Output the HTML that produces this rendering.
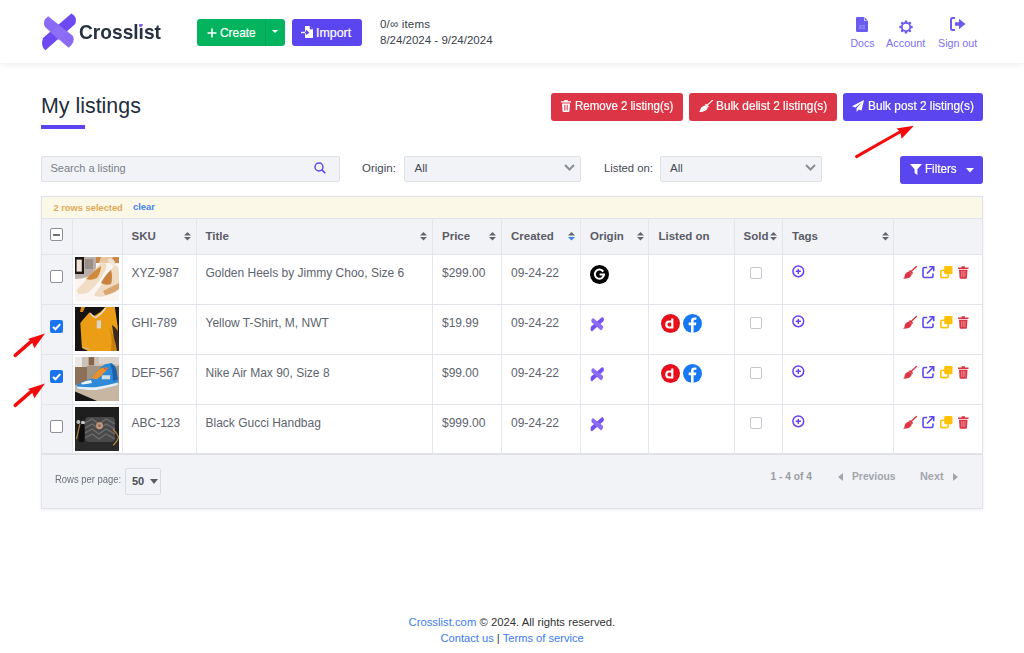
<!DOCTYPE html>
<html><head><meta charset="utf-8">
<style>
*{box-sizing:border-box;margin:0;padding:0}
html,body{width:1024px;height:653px;overflow:hidden;background:#fff;font-family:"Liberation Sans",sans-serif;position:relative}
.a{position:absolute;white-space:nowrap;line-height:1}
svg{position:absolute;overflow:visible}
.hdr{left:0;top:0;width:1024px;height:63px;background:#fff;box-shadow:0 1px 6px rgba(40,40,80,.10)}
.btn{position:absolute;border-radius:3px}
.green{background:#04b35e}
.purple{background:#5b45ef}
.red{background:#dc3545}
.wt{color:#fff;-webkit-text-stroke:.2px #fff}
.input{position:absolute;background:#f1f3f7;border:1px solid #dde0e5;border-radius:2px}
.hl{position:absolute;height:1px;background:#e2e4e9}
.vl{position:absolute;width:1px;background:#e4e6eb}
.th{font-size:11.5px;font-weight:bold;color:#5b5b66}
.td{font-size:12px;color:#60646e}
.cb{position:absolute;width:12px;height:12px;border:1px solid #c5c8cf;border-radius:2px;background:#fff}
.cbk{position:absolute;width:13px;height:13px;border:1px solid #8d9099;border-radius:2px;background:#fff}
</style></head><body>
<div class="a hdr"></div>
<!-- logo -->
<svg style="left:38px;top:11px" width="40" height="40" viewBox="0 0 40 40">
  <path d="M7.4 39.2Q2.2 35.5 5 27L33.4 2.5Q39.8 5.8 37.2 13Z" fill="#6c49f0"/>
  <path d="M10.1 5.2L35 25Q37.8 31 30.6 36.8L7 16Q3.6 10 10.1 5.2Z" fill="#8a6af5"/>
  <path d="M20 14.7L30.5 21L21 29.5L12 21Z" fill="#9073f6" opacity=".6"/>
</svg>
<div class="a" style="left:78.8px;top:20.9px;font-size:21px;font-weight:bold;color:#263142;transform:scaleX(.912);transform-origin:0 0">Crosslist</div>
<div class="a" style="left:139.3px;top:23.6px;width:3.2px;height:3px;border-radius:1px;background:#8a62f6"></div>

<!-- create / import -->
<div class="btn green" style="left:196.8px;top:18.6px;width:88.5px;height:27.8px"></div>
<div class="a" style="left:265px;top:18.6px;width:1px;height:27.8px;background:#0ca255"></div>
<svg style="left:206.5px;top:27.5px" width="10" height="10" viewBox="0 0 10 10"><path d="M5 0.5V9.5M0.5 5H9.5" stroke="#fff" stroke-width="1.6"/></svg>
<div class="a wt" style="left:220px;top:27.5px;font-size:11.9px">Create</div>
<svg style="left:272px;top:30px" width="6" height="3" viewBox="0 0 6 3"><path d="M0 0H6L3 3Z" fill="#fff"/></svg>
<div class="btn purple" style="left:291.5px;top:18.6px;width:70.6px;height:27.8px"></div>
<svg style="left:301px;top:26px" width="13" height="12" viewBox="0 0 13 12"><path d="M4 0H9L12 3V11.2Q12 12 11.2 12H4.8Q4 12 4 11.2Z" fill="#fff"/><path d="M9 0V3H12" fill="#5b45ef" stroke="#5b45ef" stroke-width=".6"/><path d="M0 6.5H7M5 4.5L7.3 6.5L5 8.5" stroke="#5b45ef" stroke-width="1.4" fill="none"/><path d="M0 6.5H4" stroke="#fff" stroke-width="1.4"/></svg>
<div class="a wt" style="left:316px;top:27px;font-size:12.4px">Import</div>

<div class="a" style="left:380px;top:17.5px;font-size:11.6px;letter-spacing:.15px;color:#3a3f4a">0/∞ items</div>
<div class="a" style="left:380px;top:34.8px;font-size:11.5px;color:#3a3f4a">8/24/2024 - 9/24/2024</div>

<!-- nav -->
<svg style="left:856px;top:17px" width="12" height="15" viewBox="0 0 12 15"><path d="M1.2 0H8L12 4V13.8Q12 15 10.8 15H1.2Q0 15 0 13.8V1.2Q0 0 1.2 0Z" fill="#6b5cf0"/><path d="M8 0V4H12" fill="#fff"/><path d="M8.6 0.3V3.4H11.7" fill="#6b5cf0"/><rect x="3" y="8" width="6" height="4" fill="#8f84f4"/><path d="M3 10H9M6 8V12" stroke="#6b5cf0" stroke-width=".6"/></svg>
<svg style="left:899px;top:20px" width="14" height="14" viewBox="-7 -7 14 14"><g fill="#6b5cf0"><circle r="5.1"/><rect x="-1.25" y="-6.6" width="2.5" height="3" rx=".5" transform="rotate(0)"/><rect x="-1.25" y="-6.6" width="2.5" height="3" rx=".5" transform="rotate(45)"/><rect x="-1.25" y="-6.6" width="2.5" height="3" rx=".5" transform="rotate(90)"/><rect x="-1.25" y="-6.6" width="2.5" height="3" rx=".5" transform="rotate(135)"/><rect x="-1.25" y="-6.6" width="2.5" height="3" rx=".5" transform="rotate(180)"/><rect x="-1.25" y="-6.6" width="2.5" height="3" rx=".5" transform="rotate(225)"/><rect x="-1.25" y="-6.6" width="2.5" height="3" rx=".5" transform="rotate(270)"/><rect x="-1.25" y="-6.6" width="2.5" height="3" rx=".5" transform="rotate(315)"/></g><circle r="3.3" fill="#fff"/></svg>
<svg style="left:950px;top:17px" width="16" height="14" viewBox="0 0 16 14"><path d="M5 1H2.5Q1 1 1 2.5V11.5Q1 13 2.5 13H5" stroke="#6b5cf0" stroke-width="2" fill="none"/><path d="M5 5.2H9V1.8L15.5 7L9 12.2V8.8H5Z" fill="#6b5cf0"/></svg>
<div class="a" style="left:850.5px;top:37.5px;font-size:10.5px;color:#7d70f3">Docs</div>
<div class="a" style="left:886px;top:37.5px;font-size:10.9px;color:#7d70f3">Account</div>
<div class="a" style="left:938px;top:37.5px;font-size:10.7px;color:#7d70f3">Sign out</div>

<!-- title -->
<div class="a" style="left:41px;top:96.3px;font-size:21.4px;color:#1f2d3d">My listings</div>
<div class="a" style="left:41px;top:125px;width:44px;height:4px;background:#5b45ee"></div>

<!-- bulk buttons -->
<div class="btn red" style="left:551px;top:93px;width:132px;height:28px"></div>
<svg style="left:561px;top:100px" width="10" height="12" viewBox="0 0 10 12"><path d="M0 1.3H10V2.6H0Z M3.3 0H6.7V1.3H3.3Z" fill="#fff"/><path d="M1 3.4H9L8.4 11.2Q8.3 12 7.5 12H2.5Q1.7 12 1.6 11.2Z" fill="#fff"/><path d="M3.5 4.8V10.5M5 4.8V10.5M6.5 4.8V10.5" stroke="#dc3545" stroke-width=".7"/></svg>
<div class="a wt" style="left:575px;top:100px;font-size:12.6px;transform:scaleX(.912);transform-origin:0 0">Remove 2 listing(s)</div>
<div class="btn red" style="left:689px;top:93px;width:148px;height:28px"></div>
<svg style="left:699px;top:99.8px" width="14" height="12" viewBox="0 0 14 12"><path d="M13.5 0.4L8 5.4" stroke="#fff" stroke-width="1.2" stroke-linecap="round"/><path d="M6.4 4.4L9.4 7.2" stroke="#fff" stroke-width="1.8"/><path d="M6 5.4L8.6 7.8Q8 11.9 0 12Q1.6 10.8 1.4 9.6Q1.6 6.6 6 5.4Z" fill="#fff"/></svg>
<div class="a wt" style="left:716px;top:100px;font-size:12.6px;transform:scaleX(.94);transform-origin:0 0">Bulk delist 2 listing(s)</div>
<div class="btn purple" style="left:843px;top:93px;width:140px;height:28px"></div>
<svg style="left:852px;top:100px" width="12" height="12" viewBox="0 0 12 12"><path d="M12 0L0 6.2L3.4 7.6L10 2.2L4.6 8.2L4.6 12L6.8 9.4L9.6 10.6Z" fill="#fff"/></svg>
<div class="a wt" style="left:868px;top:100px;font-size:12.6px;transform:scaleX(.94);transform-origin:0 0">Bulk post 2 listing(s)</div>

<!-- arrow to bulk post -->
<svg style="left:0;top:0" width="1024" height="200" viewBox="0 0 1024 200"><path d="M856.5 156.6L900.2 131.7" stroke="#f40b0b" stroke-width="3" stroke-linecap="round"/><path d="M913.9 125.7L896.5 128.6L900.2 131.7L901.6 138.8Z" fill="#f40b0b"/></svg>

<!-- filter row -->
<div class="input" style="left:41px;top:156px;width:299px;height:26px"></div>
<div class="a" style="left:50.5px;top:162.5px;font-size:11px;color:#7b808b">Search a listing</div>
<svg style="left:314px;top:162px" width="12" height="12" viewBox="0 0 12 12"><circle cx="5" cy="5" r="4" stroke="#5b45ef" stroke-width="1.4" fill="none"/><path d="M7.9 7.9L10.8 10.8" stroke="#5b45ef" stroke-width="1.6" stroke-linecap="round"/></svg>
<div class="a" style="left:362px;top:162.5px;font-size:11.5px;color:#444a55">Origin:</div>
<div class="input" style="left:404px;top:156px;width:177px;height:26px"></div>
<div class="a" style="left:414.5px;top:162.5px;font-size:11.5px;color:#444a55">All</div>
<svg style="left:564px;top:164px" width="11" height="7" viewBox="0 0 11 7"><path d="M1 1L5.5 5.5L10 1" stroke="#8a8e96" stroke-width="2" fill="none"/></svg>
<div class="a" style="left:604px;top:162.5px;font-size:11.3px;color:#444a55">Listed on:</div>
<div class="input" style="left:660px;top:156px;width:162px;height:26px"></div>
<div class="a" style="left:670px;top:162.5px;font-size:11.5px;color:#444a55">All</div>
<svg style="left:805px;top:164px" width="11" height="7" viewBox="0 0 11 7"><path d="M1 1L5.5 5.5L10 1" stroke="#8a8e96" stroke-width="2" fill="none"/></svg>
<div class="btn purple" style="left:900px;top:156px;width:83px;height:28px"></div>
<svg style="left:909.5px;top:164px" width="12" height="11" viewBox="0 0 12 11"><path d="M0 0H12L7.4 5.2V11L4.6 9V5.2Z" fill="#fff"/></svg>
<div class="a wt" style="left:925px;top:163px;font-size:12.6px;transform:scaleX(.92);transform-origin:0 0">Filters</div>
<svg style="left:966px;top:168px" width="8" height="5" viewBox="0 0 8 5"><path d="M0 0H8L4 4.5Z" fill="#fff"/></svg>

<!-- table -->
<div class="a" style="left:41px;top:196px;width:942px;height:313px;border:1px solid #e1e3e8;box-shadow:0 1px 3px rgba(0,0,0,.08)"></div>
<div class="a" style="left:42px;top:197px;width:940px;height:21px;background:#fcf8e8"></div>
<div class="hl" style="left:42px;top:218px;width:940px"></div>
<div class="a" style="left:42px;top:219px;width:940px;height:35px;background:#f1f3f7"></div>
<div class="a" style="left:42px;top:254px;width:31px;height:200px;background:#f1f3f7"></div>
<div class="a" style="left:42px;top:454px;width:940px;height:54px;background:#f1f3f7"></div>
<div class="hl" style="left:42px;top:254px;width:940px"></div>
<div class="hl" style="left:42px;top:304px;width:940px"></div>
<div class="hl" style="left:42px;top:354px;width:940px"></div>
<div class="hl" style="left:42px;top:404px;width:940px"></div>
<div class="hl" style="left:42px;top:453px;width:940px;height:2px;background:#e0e2e6"></div>
<div class="vl" style="left:72px;top:219px;height:235px"></div>
<div class="vl" style="left:122px;top:219px;height:235px"></div>
<div class="vl" style="left:196px;top:219px;height:235px"></div>
<div class="vl" style="left:432px;top:219px;height:235px"></div>
<div class="vl" style="left:501px;top:219px;height:235px"></div>
<div class="vl" style="left:580px;top:219px;height:235px"></div>
<div class="vl" style="left:648px;top:219px;height:235px"></div>
<div class="vl" style="left:734px;top:219px;height:235px"></div>
<div class="vl" style="left:782px;top:219px;height:235px"></div>
<div class="vl" style="left:893px;top:219px;height:235px"></div>

<div class="a" style="left:53.5px;top:203.5px;font-size:9.3px;font-weight:bold;color:#e2a955">2 rows selected</div>
<div class="a" style="left:133px;top:202.3px;font-size:9.4px;font-weight:bold;color:#3d84f2">clear</div>

<!-- header -->
<div class="cbk" style="left:50px;top:228px"><div style="position:absolute;left:2px;top:5px;width:7px;height:1.5px;background:#6d7079"></div></div>
<div class="a th" style="left:131.5px;top:231px">SKU</div>
<div class="a th" style="left:205.5px;top:231px">Title</div>
<div class="a th" style="left:442px;top:231px">Price</div>
<div class="a th" style="left:511px;top:231px">Created</div>
<div class="a th" style="left:590px;top:231px">Origin</div>
<div class="a th" style="left:658.5px;top:231px">Listed on</div>
<div class="a th" style="left:743.5px;top:231px">Sold</div>
<div class="a th" style="left:792px;top:231px">Tags</div>
<!-- sort icons -->
<svg style="left:183.5px;top:231.6px" width="7" height="8.6" viewBox="0 0 7 8.6"><path d="M0 3.6H7L3.5 0Z M0 5H7L3.5 8.6Z" fill="#63666d"/></svg>
<svg style="left:420px;top:231.6px" width="7" height="8.6" viewBox="0 0 7 8.6"><path d="M0 3.6H7L3.5 0Z M0 5H7L3.5 8.6Z" fill="#63666d"/></svg>
<svg style="left:489px;top:231.6px" width="7" height="8.6" viewBox="0 0 7 8.6"><path d="M0 3.6H7L3.5 0Z M0 5H7L3.5 8.6Z" fill="#63666d"/></svg>
<svg style="left:567.5px;top:231.6px" width="7" height="8.6" viewBox="0 0 7 8.6"><path d="M0 3.6H7L3.5 0Z" fill="#63666d"/><path d="M0 5H7L3.5 8.6Z" fill="#3b82f0"/></svg>
<svg style="left:636.5px;top:231.6px" width="7" height="8.6" viewBox="0 0 7 8.6"><path d="M0 3.6H7L3.5 0Z M0 5H7L3.5 8.6Z" fill="#63666d"/></svg>
<svg style="left:769.5px;top:231.6px" width="7" height="8.6" viewBox="0 0 7 8.6"><path d="M0 3.6H7L3.5 0Z M0 5H7L3.5 8.6Z" fill="#63666d"/></svg>
<svg style="left:881.5px;top:231.6px" width="7" height="8.6" viewBox="0 0 7 8.6"><path d="M0 3.6H7L3.5 0Z M0 5H7L3.5 8.6Z" fill="#63666d"/></svg>

<!-- ROWS -->
<div class="cbk" style="left:50px;top:270px"></div>
<svg style="left:75px;top:257px" width="44" height="44" viewBox="0 0 44 44"><defs><filter id="bl1" x="-10%" y="-10%" width="120%" height="120%"><feGaussianBlur stdDeviation="0.5"/></filter></defs><rect width="44" height="44" fill="#fbf5f1"/><g filter="url(#bl1)"><path d="M0 0H21V14Q14 22 0 22Z" fill="#b9aea8"/><rect x="10" y="2" width="8" height="10" fill="#9a8e88"/><rect x="0" y="0" width="9" height="17" fill="#1c1816"/><rect x="1.6" y="2.6" width="5.2" height="12" fill="#efe2d6"/><rect x="21" y="0" width="23" height="6" fill="#c8874a"/><path d="M26 0H38L36 6H24Z" fill="#e8c8a0"/><path d="M2 33Q10 24 22 10Q26 5 30 6Q33 8 30 14Q24 26 14 35Q10 37 5 37Q1 36 2 33Z" fill="#f1dcc4"/><path d="M11 22Q18 14 26 9Q26 15 22 21Q16 24 11 22Z" fill="#cf8a3e"/><path d="M19 38Q24 31 30 22Q36 12 40 8Q44 10 44 16V30Q40 36 30 39Q22 41 19 38Z" fill="#efdac2"/><path d="M26 26Q30 18 36 13Q38 20 36 27Q31 29 26 26Z" fill="#c8823c"/><path d="M28 34Q36 30 44 26V32Q38 37 30 38Z" fill="#d9a670"/><path d="M33 2Q38 1 40 5L39 10Q36 6 33 5Z" fill="#f3e2d0"/></g></svg>
<div class="a td" style="left:131.5px;top:267px">XYZ-987</div>
<div class="a td" style="left:205.5px;top:267px">Golden Heels by Jimmy Choo, Size 6</div>
<div class="a td" style="left:442px;top:267px">$299.00</div>
<div class="a td" style="left:511px;top:267px">09-24-22</div>
<svg style="left:589.5px;top:264.5px" width="19" height="19" viewBox="0 0 19 19"><circle cx="9.5" cy="9.5" r="9.5" fill="#000"/><path d="M13.3 6.6A4.6 4.6 0 1 0 14 9.6H9.6" stroke="#fff" stroke-width="2" fill="none"/></svg>
<div class="cb" style="left:749.5px;top:267px"></div>
<svg style="left:792px;top:265px" width="13" height="13" viewBox="0 0 13 13"><circle cx="6.3" cy="6.3" r="5.4" stroke="#6a3ff0" stroke-width="1.5" fill="none"/><path d="M6.3 3.7V8.9M3.7 6.3H8.9" stroke="#6a3ff0" stroke-width="1.4"/></svg>
<svg style="left:902.8px;top:265.8px" width="14" height="13" viewBox="0 0 14 13"><path d="M13.4 0.5L8.2 5.6" stroke="#dc3545" stroke-width="1.4" stroke-linecap="round"/><path d="M6.4 4.6L9.6 7.6" stroke="#dc3545" stroke-width="1.9"/><path d="M6 5.6L8.8 8.3Q8 12.8 0 12.8Q1.7 11.6 1.5 10.4Q1.6 7 6 5.6Z" fill="#dc3545"/></svg>
<svg style="left:922px;top:265.5px" width="12.5" height="12.5" viewBox="0 0 12.5 12.5"><path d="M5.2 1.5H2.5Q1 1.5 1 3V10Q1 11.5 2.5 11.5H9.5Q11 11.5 11 10V7.5" stroke="#5a48f0" stroke-width="1.6" fill="none"/><path d="M5 7.5L11 1.5M7.2 0.8H11.7V5.3" stroke="#5a48f0" stroke-width="1.6" fill="none"/></svg>
<svg style="left:940px;top:265.5px" width="12.5" height="12.5" viewBox="0 0 12.5 12.5"><rect x="0.8" y="4.2" width="7.4" height="7.4" rx="1.2" stroke="#ffc107" stroke-width="1.6" fill="none"/><rect x="4.2" y="0" width="8.3" height="8.3" rx="1.3" fill="#ffc107"/></svg>
<svg style="left:958px;top:265.5px" width="10.5" height="13" viewBox="0 0 10.5 13"><path d="M0 1.6H10.5V2.9H0Z M3.5 0.3H7V1.6H3.5Z" fill="#dc3545"/><path d="M1 3.7H9.5L8.9 12Q8.8 12.8 8 12.8H2.5Q1.7 12.8 1.6 12Z" fill="#dc3545"/><path d="M3.6 5V11M5.25 5V11M6.9 5V11" stroke="#fff" stroke-width=".7" opacity=".55"/></svg>
<svg style="left:50.2px;top:320.4px" width="13" height="13" viewBox="0 0 13 13"><rect width="13" height="13" rx="2" fill="#1a73f0"/><path d="M3 6.9L5.4 9.3L10.2 4.1" stroke="#fff" stroke-width="2" fill="none"/></svg>
<svg style="left:75px;top:307px" width="44" height="44" viewBox="0 0 44 44"><defs><filter id="bl2" x="-10%" y="-10%" width="120%" height="120%"><feGaussianBlur stdDeviation="0.5"/></filter></defs><rect width="44" height="44" fill="#161312"/><g filter="url(#bl2)"><path d="M6 0H10L8 5H5Z" fill="#d98a12"/><path d="M8.4 12.2L14.5 5.3Q18 9 19.9 8.4Q26 5 30.6 0H39.8L42.8 19.9V44H13L6.9 41L5.3 16Z" fill="#eb9d14"/><path d="M37 18Q44 22 44 30V44H38Q40 34 37 18Z" fill="#3a2a22"/><path d="M34 20Q38 30 36 44H42Q40 30 34 20Z" fill="#c8800c"/><path d="M15.3 6.1Q19 11 21 10.3Q27 7 30.6 0.7" stroke="#e6e0d6" stroke-width="1.5" fill="none"/><rect x="21.8" y="13.4" width="4.2" height="8" fill="#d9d6d0"/><path d="M8 40Q11 42 14 42" stroke="#c8c2b8" stroke-width="1" fill="none"/></g></svg>
<div class="a td" style="left:131.5px;top:317px">GHI-789</div>
<div class="a td" style="left:205.5px;top:317px">Yellow T-Shirt, M, NWT</div>
<div class="a td" style="left:442px;top:317px">$19.99</div>
<div class="a td" style="left:511px;top:317px">09-24-22</div>
<svg style="left:589.4px;top:315.6px" width="16" height="16" viewBox="0 0 40.6 40.6"><path d="M7.4 39.2Q2.2 35.5 5 27L33.4 2.5Q39.8 5.8 37.2 13Z" fill="#7450f1"/><path d="M10.1 5.2L35 25Q37.8 31 30.6 36.8L7 16Q3.6 10 10.1 5.2Z" fill="#8c6cf5"/></svg>
<svg style="left:661px;top:313.5px" width="19" height="19" viewBox="0 0 19 19"><circle cx="9.5" cy="9.5" r="9.5" fill="#e5101c"/><path d="M11.3 4.5V13.5H8.3Q5.3 13.5 5.3 10.5Q5.3 7.5 8.3 7.5H11.3" stroke="#fff" stroke-width="2.2" fill="none"/></svg>
<svg style="left:682.5px;top:313.5px" width="19" height="19" viewBox="0 0 19 19"><circle cx="9.5" cy="9.5" r="9.5" fill="#1877f2"/><path d="M10.6 19V11.2H13L13.3 8.6H10.6V7Q10.6 5.8 11.9 5.8H13.4V3.6Q12.6 3.4 11.6 3.4Q8 3.4 8 6.8V8.6H5.7V11.2H8V19Z" fill="#fff"/></svg>
<div class="cb" style="left:749.5px;top:317px"></div>
<svg style="left:792px;top:315px" width="13" height="13" viewBox="0 0 13 13"><circle cx="6.3" cy="6.3" r="5.4" stroke="#6a3ff0" stroke-width="1.5" fill="none"/><path d="M6.3 3.7V8.9M3.7 6.3H8.9" stroke="#6a3ff0" stroke-width="1.4"/></svg>
<svg style="left:902.8px;top:315.8px" width="14" height="13" viewBox="0 0 14 13"><path d="M13.4 0.5L8.2 5.6" stroke="#dc3545" stroke-width="1.4" stroke-linecap="round"/><path d="M6.4 4.6L9.6 7.6" stroke="#dc3545" stroke-width="1.9"/><path d="M6 5.6L8.8 8.3Q8 12.8 0 12.8Q1.7 11.6 1.5 10.4Q1.6 7 6 5.6Z" fill="#dc3545"/></svg>
<svg style="left:922px;top:315.5px" width="12.5" height="12.5" viewBox="0 0 12.5 12.5"><path d="M5.2 1.5H2.5Q1 1.5 1 3V10Q1 11.5 2.5 11.5H9.5Q11 11.5 11 10V7.5" stroke="#5a48f0" stroke-width="1.6" fill="none"/><path d="M5 7.5L11 1.5M7.2 0.8H11.7V5.3" stroke="#5a48f0" stroke-width="1.6" fill="none"/></svg>
<svg style="left:940px;top:315.5px" width="12.5" height="12.5" viewBox="0 0 12.5 12.5"><rect x="0.8" y="4.2" width="7.4" height="7.4" rx="1.2" stroke="#ffc107" stroke-width="1.6" fill="none"/><rect x="4.2" y="0" width="8.3" height="8.3" rx="1.3" fill="#ffc107"/></svg>
<svg style="left:958px;top:315.5px" width="10.5" height="13" viewBox="0 0 10.5 13"><path d="M0 1.6H10.5V2.9H0Z M3.5 0.3H7V1.6H3.5Z" fill="#dc3545"/><path d="M1 3.7H9.5L8.9 12Q8.8 12.8 8 12.8H2.5Q1.7 12.8 1.6 12Z" fill="#dc3545"/><path d="M3.6 5V11M5.25 5V11M6.9 5V11" stroke="#fff" stroke-width=".7" opacity=".55"/></svg>
<svg style="left:0;top:0px" width="60" height="400" viewBox="0 0 60 400"><path d="M15.2 355.4L31.6 341.1" stroke="#f40b0b" stroke-width="3.4" stroke-linecap="round"/><path d="M45 333.6L27.8 339L31.6 341.1L34.3 348.3Z" fill="#f40b0b"/></svg>
<svg style="left:50.2px;top:370.4px" width="13" height="13" viewBox="0 0 13 13"><rect width="13" height="13" rx="2" fill="#1a73f0"/><path d="M3 6.9L5.4 9.3L10.2 4.1" stroke="#fff" stroke-width="2" fill="none"/></svg>
<svg style="left:75px;top:357px" width="44" height="44" viewBox="0 0 44 44"><defs><filter id="bl3" x="-10%" y="-10%" width="120%" height="120%"><feGaussianBlur stdDeviation="0.5"/></filter></defs><rect width="44" height="44" fill="#b8a898"/><g filter="url(#bl3)"><rect x="0" y="0" width="44" height="10" fill="#cbc1b6"/><rect x="0" y="0" width="7" height="11" fill="#ece8e4"/><rect x="13.7" y="0" width="5.4" height="8.4" fill="#86654a"/><rect x="24" y="0" width="20" height="7" fill="#dcd4cc"/><rect x="0" y="10" width="12" height="19" fill="#8c7058"/><rect x="12" y="9" width="32" height="19" fill="#a49484"/><path d="M0 28L44 26V44H0Z" fill="#c6b6a2"/><path d="M0 34.4L22 44H0Z" fill="#171514"/><path d="M1.1 29Q4 26 6.9 25.2L16 21.4L23.7 12.2Q28 7.5 31.3 6.9L36.7 6.1Q40 8 41.3 12.2L42.8 22.2V28.3Q30 31 22.2 32.9Q10 33 2.3 31.4Z" fill="#2d8ad6"/><path d="M35 6.5Q40 8 41.3 12.2L42.8 22.2L38 24Q38 14 35 6.5Z" fill="#1f5fae"/><path d="M1.5 29.6Q14 30.5 22 30Q34 28 42.8 25.5V28.3Q32 31 22.2 32.9Q10 33.2 2.3 31.4Z" fill="#e9eef2"/><path d="M6 26Q11 23.5 16 23L17 26Q11 27 7 27.5Z" fill="#eef2f5"/><path d="M16 21.4L23.7 12.2Q27 10 33 10.7L31 14Q26 19 22 22.2Z" fill="#e6902e"/><path d="M26.8 18.3L35.2 18.3L35 22.2L26.8 22.2Z" fill="#d5dde4"/><path d="M29 11L31.5 12.5" stroke="#e24a3a" stroke-width="1.2"/></g></svg>
<div class="a td" style="left:131.5px;top:367px">DEF-567</div>
<div class="a td" style="left:205.5px;top:367px">Nike Air Max 90, Size 8</div>
<div class="a td" style="left:442px;top:367px">$99.00</div>
<div class="a td" style="left:511px;top:367px">09-24-22</div>
<svg style="left:589.4px;top:365.6px" width="16" height="16" viewBox="0 0 40.6 40.6"><path d="M7.4 39.2Q2.2 35.5 5 27L33.4 2.5Q39.8 5.8 37.2 13Z" fill="#7450f1"/><path d="M10.1 5.2L35 25Q37.8 31 30.6 36.8L7 16Q3.6 10 10.1 5.2Z" fill="#8c6cf5"/></svg>
<svg style="left:661px;top:363.5px" width="19" height="19" viewBox="0 0 19 19"><circle cx="9.5" cy="9.5" r="9.5" fill="#e5101c"/><path d="M11.3 4.5V13.5H8.3Q5.3 13.5 5.3 10.5Q5.3 7.5 8.3 7.5H11.3" stroke="#fff" stroke-width="2.2" fill="none"/></svg>
<svg style="left:682.5px;top:363.5px" width="19" height="19" viewBox="0 0 19 19"><circle cx="9.5" cy="9.5" r="9.5" fill="#1877f2"/><path d="M10.6 19V11.2H13L13.3 8.6H10.6V7Q10.6 5.8 11.9 5.8H13.4V3.6Q12.6 3.4 11.6 3.4Q8 3.4 8 6.8V8.6H5.7V11.2H8V19Z" fill="#fff"/></svg>
<div class="cb" style="left:749.5px;top:367px"></div>
<svg style="left:792px;top:365px" width="13" height="13" viewBox="0 0 13 13"><circle cx="6.3" cy="6.3" r="5.4" stroke="#6a3ff0" stroke-width="1.5" fill="none"/><path d="M6.3 3.7V8.9M3.7 6.3H8.9" stroke="#6a3ff0" stroke-width="1.4"/></svg>
<svg style="left:902.8px;top:365.8px" width="14" height="13" viewBox="0 0 14 13"><path d="M13.4 0.5L8.2 5.6" stroke="#dc3545" stroke-width="1.4" stroke-linecap="round"/><path d="M6.4 4.6L9.6 7.6" stroke="#dc3545" stroke-width="1.9"/><path d="M6 5.6L8.8 8.3Q8 12.8 0 12.8Q1.7 11.6 1.5 10.4Q1.6 7 6 5.6Z" fill="#dc3545"/></svg>
<svg style="left:922px;top:365.5px" width="12.5" height="12.5" viewBox="0 0 12.5 12.5"><path d="M5.2 1.5H2.5Q1 1.5 1 3V10Q1 11.5 2.5 11.5H9.5Q11 11.5 11 10V7.5" stroke="#5a48f0" stroke-width="1.6" fill="none"/><path d="M5 7.5L11 1.5M7.2 0.8H11.7V5.3" stroke="#5a48f0" stroke-width="1.6" fill="none"/></svg>
<svg style="left:940px;top:365.5px" width="12.5" height="12.5" viewBox="0 0 12.5 12.5"><rect x="0.8" y="4.2" width="7.4" height="7.4" rx="1.2" stroke="#ffc107" stroke-width="1.6" fill="none"/><rect x="4.2" y="0" width="8.3" height="8.3" rx="1.3" fill="#ffc107"/></svg>
<svg style="left:958px;top:365.5px" width="10.5" height="13" viewBox="0 0 10.5 13"><path d="M0 1.6H10.5V2.9H0Z M3.5 0.3H7V1.6H3.5Z" fill="#dc3545"/><path d="M1 3.7H9.5L8.9 12Q8.8 12.8 8 12.8H2.5Q1.7 12.8 1.6 12Z" fill="#dc3545"/><path d="M3.6 5V11M5.25 5V11M6.9 5V11" stroke="#fff" stroke-width=".7" opacity=".55"/></svg>
<svg style="left:0;top:50px" width="60" height="400" viewBox="0 0 60 400"><path d="M15.2 355.4L31.6 341.1" stroke="#f40b0b" stroke-width="3.4" stroke-linecap="round"/><path d="M45 333.6L27.8 339L31.6 341.1L34.3 348.3Z" fill="#f40b0b"/></svg>
<div class="cbk" style="left:50px;top:420px"></div>
<svg style="left:75px;top:407px" width="44" height="44" viewBox="0 0 44 44"><defs><filter id="bl4" x="-10%" y="-10%" width="120%" height="120%"><feGaussianBlur stdDeviation="0.4"/></filter></defs><rect width="44" height="44" fill="#1f1e1e"/><g filter="url(#bl4)"><path d="M0 32Q20 36 44 28V44H0Z" fill="#2c2b2b"/><path d="M10 14Q10 10 14 10H36Q40 10 40 14V31Q40 35 36 35H14Q10 35 10 31Z" fill="#4a4949"/><path d="M10 16L17 12L24 17L31 12L40 17M10 21L17 17L24 22L31 17L40 22M10 26L17 22L24 27L31 22L40 27M10 31L17 27L24 32L31 27L40 32" stroke="#6f6e6e" stroke-width="1.3" fill="none"/><circle cx="24.5" cy="18.7" r="3.4" fill="#c8987a"/><circle cx="24.5" cy="18.7" r="1.4" fill="#7a6a60"/><circle cx="3.4" cy="14.9" r="2" fill="#b8b8b8"/><circle cx="8" cy="15.7" r="2" fill="#c8c8c8"/><rect x="4" y="17" width="5" height="18" fill="#111"/><path d="M5 17Q3 25 1.5 32" stroke="#a87840" stroke-width="1.2" fill="none"/><path d="M38.2 22.2Q42 26 43.6 30.6Q42 35 38.2 38.2" stroke="#b88048" stroke-width="1.3" fill="none"/></g></svg>
<div class="a td" style="left:131.5px;top:417px">ABC-123</div>
<div class="a td" style="left:205.5px;top:417px">Black Gucci Handbag</div>
<div class="a td" style="left:442px;top:417px">$999.00</div>
<div class="a td" style="left:511px;top:417px">09-24-22</div>
<svg style="left:589.4px;top:415.6px" width="16" height="16" viewBox="0 0 40.6 40.6"><path d="M7.4 39.2Q2.2 35.5 5 27L33.4 2.5Q39.8 5.8 37.2 13Z" fill="#7450f1"/><path d="M10.1 5.2L35 25Q37.8 31 30.6 36.8L7 16Q3.6 10 10.1 5.2Z" fill="#8c6cf5"/></svg>
<div class="cb" style="left:749.5px;top:417px"></div>
<svg style="left:792px;top:415px" width="13" height="13" viewBox="0 0 13 13"><circle cx="6.3" cy="6.3" r="5.4" stroke="#6a3ff0" stroke-width="1.5" fill="none"/><path d="M6.3 3.7V8.9M3.7 6.3H8.9" stroke="#6a3ff0" stroke-width="1.4"/></svg>
<svg style="left:902.8px;top:415.8px" width="14" height="13" viewBox="0 0 14 13"><path d="M13.4 0.5L8.2 5.6" stroke="#dc3545" stroke-width="1.4" stroke-linecap="round"/><path d="M6.4 4.6L9.6 7.6" stroke="#dc3545" stroke-width="1.9"/><path d="M6 5.6L8.8 8.3Q8 12.8 0 12.8Q1.7 11.6 1.5 10.4Q1.6 7 6 5.6Z" fill="#dc3545"/></svg>
<svg style="left:922px;top:415.5px" width="12.5" height="12.5" viewBox="0 0 12.5 12.5"><path d="M5.2 1.5H2.5Q1 1.5 1 3V10Q1 11.5 2.5 11.5H9.5Q11 11.5 11 10V7.5" stroke="#5a48f0" stroke-width="1.6" fill="none"/><path d="M5 7.5L11 1.5M7.2 0.8H11.7V5.3" stroke="#5a48f0" stroke-width="1.6" fill="none"/></svg>
<svg style="left:940px;top:415.5px" width="12.5" height="12.5" viewBox="0 0 12.5 12.5"><rect x="0.8" y="4.2" width="7.4" height="7.4" rx="1.2" stroke="#ffc107" stroke-width="1.6" fill="none"/><rect x="4.2" y="0" width="8.3" height="8.3" rx="1.3" fill="#ffc107"/></svg>
<svg style="left:958px;top:415.5px" width="10.5" height="13" viewBox="0 0 10.5 13"><path d="M0 1.6H10.5V2.9H0Z M3.5 0.3H7V1.6H3.5Z" fill="#dc3545"/><path d="M1 3.7H9.5L8.9 12Q8.8 12.8 8 12.8H2.5Q1.7 12.8 1.6 12Z" fill="#dc3545"/><path d="M3.6 5V11M5.25 5V11M6.9 5V11" stroke="#fff" stroke-width=".7" opacity=".55"/></svg>
<!-- /ROWS -->

<!-- pagination -->
<div class="a" style="left:55px;top:474px;font-size:10.5px;color:#6b707a;transform:scaleX(.9);transform-origin:0 0">Rows per page:</div>
<div class="a" style="left:124.5px;top:468px;width:36px;height:27px;border:1px solid #d9dce2;border-radius:2px"></div>
<div class="a" style="left:132px;top:476px;font-size:11px;font-weight:bold;color:#4a4d55">50</div>
<svg style="left:150px;top:479px" width="8" height="5" viewBox="0 0 8 5"><path d="M0 0H8L4 5Z" fill="#5a5d65"/></svg>
<div class="a" style="left:770.5px;top:471.5px;font-size:10.2px;font-weight:bold;color:#9a9ca3">1 - 4 of 4</div>
<svg style="left:837.5px;top:473px" width="5" height="8" viewBox="0 0 5 8"><path d="M5 0V8L0 4Z" fill="#a3a5ab"/></svg>
<div class="a" style="left:852px;top:471.5px;font-size:10.3px;font-weight:bold;color:#a3a5ab">Previous</div>
<div class="a" style="left:920px;top:470.5px;font-size:10.9px;font-weight:bold;color:#a3a5ab">Next</div>
<svg style="left:953px;top:473px" width="5" height="8" viewBox="0 0 5 8"><path d="M0 0V8L5 4Z" fill="#a3a5ab"/></svg>

<!-- footer -->
<div class="a" style="left:408.5px;top:617px;font-size:11.3px;color:#333"><span style="color:#3c7cf0">Crosslist.com</span> © 2024. All rights reserved.</div>
<div class="a" style="left:440.5px;top:633px;font-size:11.15px;color:#333"><span style="color:#3c7cf0">Contact us</span> | <span style="color:#3c7cf0">Terms of service</span></div>
</body></html>
